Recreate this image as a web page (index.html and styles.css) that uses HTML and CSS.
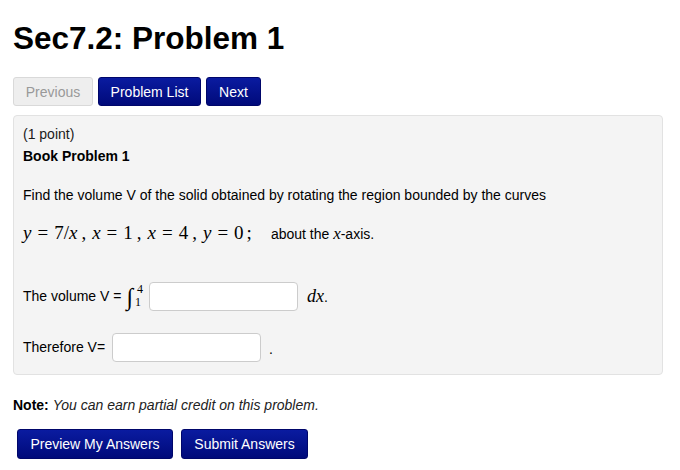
FILE: index.html
```html
<!DOCTYPE html>
<html>
<head>
<meta charset="utf-8">
<link rel="stylesheet" href="styles.css">
</head>
<body>
<div class="page">
  <h1 class="title">Sec7.2: Problem 1</h1>
  <div class="nav">
    <span class="btn btn-disabled">Previous</span>
    <span class="btn btn-primary">Problem List</span>
    <span class="btn btn-primary">Next</span>
  </div>
  <div class="problem">
    <div class="points">(1 point)</div>
    <div class="book">Book Problem 1</div>
    <p class="text">Find the volume V of the solid obtained by rotating the region bounded by the curves</p>
    <p class="mathline"><span class="math"><i>y</i><span class="op">=</span>7/<i>x</i><span class="comma">,</span><i>x</i><span class="op">=</span>1<span class="comma">,</span><i>x</i><span class="op">=</span>4<span class="comma">,</span><i>y</i><span class="op">=</span>0<span class="semi">;</span></span><span class="about">about the <i class="mx">x</i>-axis.</span></p>
    <div class="answer-row first">
      <span class="label">The volume V =</span>
      <span class="integral"><span class="intsign">∫</span><span class="limits"><span class="up">4</span><span class="lo">1</span></span></span>
      <span class="input vol"></span>
      <span class="dx"><i>dx</i><span class="dot">.</span></span>
    </div>
    <div class="answer-row second">
      <span class="label">Therefore V=</span>
      <span class="input there"></span>
      <span class="dot2">.</span>
    </div>
  </div>
  <p class="note"><b>Note:</b> <i>You can earn partial credit on this problem.</i></p>
  <div class="actions">
    <span class="btn btn-primary big preview">Preview My Answers</span>
    <span class="btn btn-primary big submit">Submit Answers</span>
  </div>
</div>
</body>
</html>
```
FILE: styles.css
```css
html, body { margin: 0; padding: 0; background: #fff; }
body { font-family: "Liberation Sans", Arial, sans-serif; color: #000; font-size: 14px; }
.page { padding: 0 13px; }
.title { margin: 0; padding-top: 19px; font-size: 31.5px; font-weight: bold; line-height: 38px; height: 58px; }
.nav { display: flex; gap: 5px; }
.btn { display: inline-flex; align-items: center; justify-content: center; height: 29px; box-sizing: border-box; padding: 0; border-radius: 3px; font-size: 14px; }
.btn-disabled { background: #eeeeee; border: 1px solid #d9d9d9; color: #999; width: 80px; }
.btn-primary { background: linear-gradient(#0a1ba0, #000a7a); border: 1px solid #00066a; color: #fff; }
.nav .btn-primary:nth-child(2) { width: 103px; }
.nav .btn-primary:nth-child(3) { width: 55px; }
.problem { margin-top: 9px; width: 650px; box-sizing: border-box; background: #f4f4f4; border: 1px solid #e2e2e2; border-radius: 4px; padding: 9px 9px; height: 260px; }
.points { line-height: 18px; color: #1a1a1a; }
.book { font-weight: bold; line-height: 18px; margin-top: 4px; }
.text { margin: 21px 0 0; line-height: 18px; }
.mathline { margin: 17px 0 0; display: flex; align-items: baseline; line-height: 24px; }
.math { font-family: "Liberation Serif", "DejaVu Serif", serif; font-size: 19px; }
.math i { font-style: italic; }
.op { margin: 0 6px; }
.comma { margin: 0 6px 0 4px; }
.semi { margin-left: 3px; }
.about { margin-left: 19px; }
.mx { font-family: "Liberation Serif", serif; font-size: 17px; }
.answer-row { display: flex; align-items: center; height: 30px; }
.answer-row.first { margin-top: 35px; }
.answer-row.second { margin-top: 21px; }
.integral { display: inline-flex; align-items: center; margin-left: 5px; font-family: "Liberation Serif", serif; }
.intsign { font-size: 24px; position: relative; top: 1px; }
.limits { display: inline-flex; flex-direction: column; font-size: 12px; line-height: 13px; margin-left: 2px; }
.limits .up { margin-left: 2px; }
.limits .lo { margin-left: 0; }
.input { display: inline-block; height: 29px; box-sizing: border-box; background: #fff; border: 1px solid #ccc; border-radius: 4px; width: 149px; }
.input.vol { margin-left: 6px; }
.input.there { margin-left: 7px; }
.dx { margin-left: 9px; font-family: "Liberation Serif", serif; font-size: 18px; }
.dx .dot { font-family: "Liberation Sans", sans-serif; font-size: 14px; }
.dot2 { margin-left: 8px; position: relative; top: 2px; }
.note { margin: 21px 0 0; line-height: 18px; font-size: 14px; }
.note i { color: #222; }
.actions { display: flex; gap: 8px; margin-top: 15px; padding-left: 4px; }
.btn.big { height: 30px; }
.preview { width: 156px; }
.submit { width: 127px; }
```
